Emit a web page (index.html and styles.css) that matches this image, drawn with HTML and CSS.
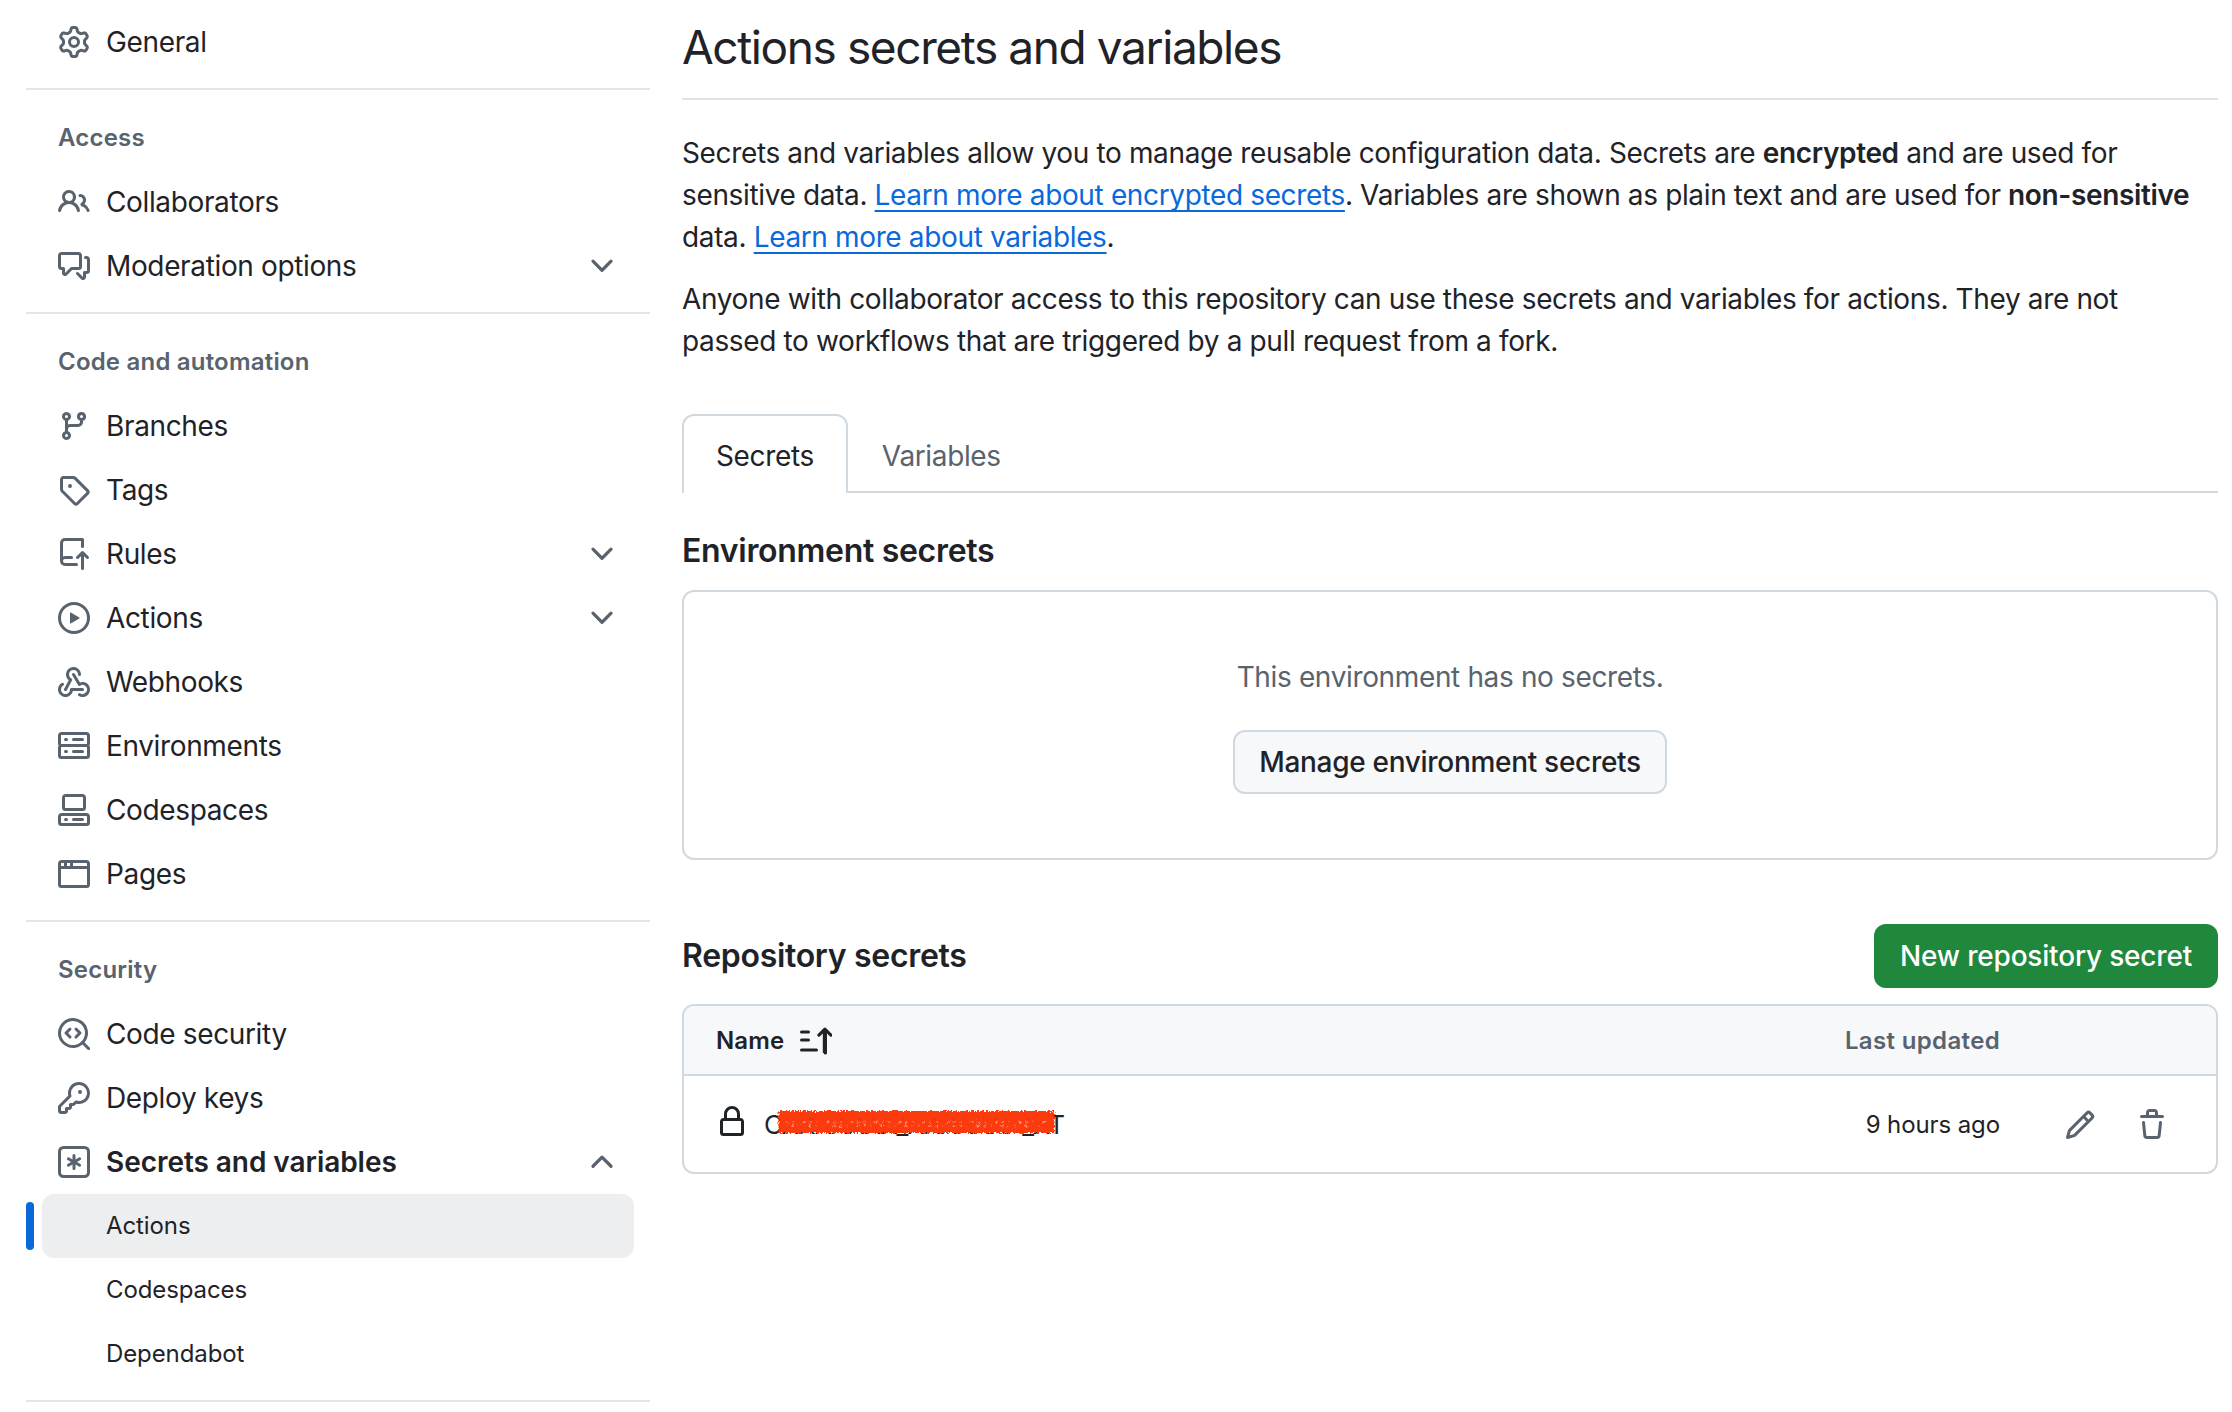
FILE: index.html
```html
<!DOCTYPE html>
<html lang="en">
<head>
<meta charset="utf-8">
<title>Actions secrets and variables</title>
<link rel="stylesheet" href="styles.css">
</head>
<body>
<svg class="defs" width="0" height="0" aria-hidden="true">
<filter id="rough" x="-5%" y="-30%" width="110%" height="160%"><feTurbulence type="fractalNoise" baseFrequency="0.55" numOctaves="2" seed="7"/><feDisplacementMap in="SourceGraphic" scale="5" xChannelSelector="R" yChannelSelector="G"/></filter>
<symbol id="gear" viewBox="0 0 16 16"><path d="M8 0a8.2 8.2 0 0 1 .701.031C9.444.095 9.99.645 10.16 1.29l.288 1.107c.018.066.079.158.212.224.231.114.454.243.668.386.123.082.233.09.299.071l1.103-.303c.644-.176 1.392.021 1.82.63.27.385.506.792.704 1.218.315.675.111 1.422-.364 1.891l-.814.806c-.049.048-.098.147-.088.294.016.257.016.515 0 .772-.01.147.038.246.088.294l.814.806c.475.469.679 1.216.364 1.891a7.977 7.977 0 0 1-.704 1.217c-.428.61-1.176.807-1.82.63l-1.102-.302c-.067-.019-.177-.011-.3.071a5.909 5.909 0 0 1-.668.386c-.133.066-.194.158-.211.224l-.29 1.106c-.168.646-.715 1.196-1.458 1.26a8.006 8.006 0 0 1-1.402 0c-.743-.064-1.289-.614-1.458-1.26l-.289-1.106c-.018-.066-.079-.158-.212-.224a5.738 5.738 0 0 1-.668-.386c-.123-.082-.233-.09-.299-.071l-1.103.303c-.644.176-1.392-.021-1.82-.63a8.12 8.12 0 0 1-.704-1.218c-.315-.675-.111-1.422.363-1.891l.815-.806c.05-.048.098-.147.088-.294a6.214 6.214 0 0 1 0-.772c.01-.147-.038-.246-.088-.294l-.815-.806C.635 6.045.431 5.298.746 4.623a7.92 7.92 0 0 1 .704-1.217c.428-.61 1.176-.807 1.82-.63l1.102.302c.067.019.177.011.3-.071.214-.143.437-.272.668-.386.133-.066.194-.158.211-.224l.29-1.106C6.009.645 6.556.095 7.299.03 7.53.01 7.764 0 8 0Zm-.571 1.525c-.036.003-.108.036-.137.146l-.289 1.105c-.147.561-.549.967-.998 1.189-.173.086-.34.183-.5.29-.417.278-.97.423-1.529.27l-1.103-.303c-.109-.03-.175.016-.195.045-.22.312-.412.644-.573.99-.014.031-.021.11.059.19l.815.806c.411.406.562.957.53 1.456a4.709 4.709 0 0 0 0 .582c.032.499-.119 1.05-.53 1.456l-.815.806c-.081.08-.073.159-.059.19.162.346.353.677.573.989.02.03.085.076.195.046l1.102-.303c.56-.153 1.113-.008 1.53.27.161.107.328.204.501.29.447.222.85.629.997 1.189l.289 1.105c.029.109.101.143.137.146a6.6 6.6 0 0 0 1.142 0c.036-.3.108-.036.137-.146l.289-1.105c.147-.561.549-.967.998-1.189.173-.086.34-.183.5-.29.417-.278.97-.423 1.529-.27l1.103.303c.109.029.175-.016.195-.045.22-.313.411-.644.573-.99.014-.031.021-.11-.059-.19l-.815-.806c-.411-.406-.562-.957-.53-1.456a4.709 4.709 0 0 0 0-.582c-.032-.499.119-1.05.53-1.456l.815-.806c.081-.08.073-.159.059-.19a6.464 6.464 0 0 0-.573-.989c-.02-.03-.085-.076-.195-.046l-1.102.303c-.56.153-1.113.008-1.53-.27a4.44 4.44 0 0 0-.501-.29c-.447-.222-.85-.629-.997-1.189l-.289-1.105c-.029-.11-.101-.143-.137-.146a6.6 6.6 0 0 0-1.142 0ZM11 8a3 3 0 1 1-6 0 3 3 0 0 1 6 0ZM9.5 8a1.5 1.5 0 1 0-3.001.001A1.5 1.5 0 0 0 9.5 8Z"/></symbol>
<symbol id="people" viewBox="0 0 16 16"><path d="M2 5.5a3.5 3.5 0 1 1 5.898 2.549 5.508 5.508 0 0 1 3.034 4.084.75.75 0 1 1-1.482.235 4 4 0 0 0-7.9 0 .75.75 0 0 1-1.482-.236A5.507 5.507 0 0 1 3.102 8.05 3.493 3.493 0 0 1 2 5.5ZM11 4a3.001 3.001 0 0 1 2.22 5.018 5.01 5.01 0 0 1 2.56 3.012.749.749 0 0 1-.885.954.752.752 0 0 1-.549-.514 3.507 3.507 0 0 0-2.522-2.372.75.75 0 0 1-.574-.73v-.352a.75.75 0 0 1 .416-.672A1.5 1.5 0 0 0 11 5.5.75.75 0 0 1 11 4Zm-5.5-.5a2 2 0 1 0-.001 3.999A2 2 0 0 0 5.5 3.5Z"/></symbol>
<symbol id="discussion" viewBox="0 0 16 16"><path d="M1.75 1h8.5c.966 0 1.75.784 1.75 1.75v5.5A1.75 1.75 0 0 1 10.25 10H7.061l-2.574 2.573A1.458 1.458 0 0 1 2 11.543V10h-.25A1.75 1.75 0 0 1 0 8.25v-5.5C0 1.784.784 1 1.75 1ZM1.5 2.75v5.5c0 .138.112.25.25.25h1a.75.75 0 0 1 .75.75v2.19l2.72-2.72a.749.749 0 0 1 .53-.22h3.5a.25.25 0 0 0 .25-.25v-5.5a.25.25 0 0 0-.25-.25h-8.5a.25.25 0 0 0-.25.25Zm13 2a.25.25 0 0 0-.25-.25h-.5a.75.75 0 0 1 0-1.5h.5c.966 0 1.75.784 1.75 1.75v5.5A1.75 1.75 0 0 1 14.25 12H14v1.543a1.458 1.458 0 0 1-2.487 1.03L9.22 12.28a.749.749 0 0 1 .326-1.275.749.749 0 0 1 .734.215l2.22 2.22v-2.19a.75.75 0 0 1 .75-.75h1a.25.25 0 0 0 .25-.25Z"/></symbol>
<symbol id="branch" viewBox="0 0 16 16"><path d="M9.5 3.25a2.25 2.25 0 1 1 3 2.122V6A2.5 2.5 0 0 1 10 8.5H6a1 1 0 0 0-1 1v1.128a2.251 2.251 0 1 1-1.5 0V5.372a2.25 2.25 0 1 1 1.5 0v1.836A2.493 2.493 0 0 1 6 7h4a1 1 0 0 0 1-1v-.628A2.25 2.25 0 0 1 9.5 3.25Zm-6 0a.75.75 0 1 0 1.5 0 .75.75 0 0 0-1.5 0Zm8.25-.75a.75.75 0 1 0 0 1.5.75.75 0 0 0 0-1.5ZM4.25 12a.75.75 0 1 0 0 1.5.75.75 0 0 0 0-1.5Z"/></symbol>
<symbol id="tag" viewBox="0 0 16 16"><path d="M1 7.775V2.75C1 1.784 1.784 1 2.75 1h5.025c.464 0 .91.184 1.238.513l6.25 6.25a1.75 1.75 0 0 1 0 2.474l-5.026 5.026a1.75 1.75 0 0 1-2.474 0l-6.25-6.25A1.752 1.752 0 0 1 1 7.775Zm1.5 0c0 .066.026.13.073.177l6.25 6.25a.25.25 0 0 0 .354 0l5.025-5.025a.25.25 0 0 0 0-.354l-6.25-6.25a.25.25 0 0 0-.177-.073H2.75a.25.25 0 0 0-.25.25ZM6 5a1 1 0 1 1 0 2 1 1 0 0 1 0-2Z"/></symbol>
<symbol id="push" viewBox="0 0 16 16"><path d="M1 2.5A2.5 2.5 0 0 1 3.5 0h8.75a.75.75 0 0 1 .75.75v3.5a.75.75 0 0 1-1.5 0V1.5h-8a1 1 0 0 0-1 1v6.708A2.493 2.493 0 0 1 3.5 9h3.25a.75.75 0 0 1 0 1.5H3.5a1 1 0 0 0 0 2h5.75a.75.75 0 0 1 0 1.5H3.5A2.5 2.5 0 0 1 1 11.5Zm13.23 7.79h-.001l-1.224-1.224v6.184a.75.75 0 0 1-1.5 0V9.066L10.28 10.29a.75.75 0 0 1-1.06-1.061l2.505-2.504a.75.75 0 0 1 1.06 0L15.29 9.23a.751.751 0 0 1-.018 1.042.751.751 0 0 1-1.042.018Z"/></symbol>
<symbol id="play" viewBox="0 0 16 16"><path d="M8 0a8 8 0 1 1 0 16A8 8 0 0 1 8 0ZM1.5 8a6.5 6.5 0 1 0 13 0 6.5 6.5 0 0 0-13 0Zm4.879-2.773 4.264 2.559a.25.25 0 0 1 0 .428l-4.264 2.559A.25.25 0 0 1 6 10.559V5.442a.25.25 0 0 1 .379-.215Z"/></symbol>
<symbol id="webhook" viewBox="0 0 16 16"><path d="M5.5 4.25a2.25 2.25 0 0 1 4.5 0 .75.75 0 0 0 1.5 0 3.75 3.75 0 1 0-6.14 2.889l-2.272 4.258a.75.75 0 0 0 1.324.706L7 7.25a.75.75 0 0 0-.309-1.015A2.25 2.25 0 0 1 5.5 4.25Z"/><path d="M7.364 3.607a.75.75 0 0 1 1.03.257l2.608 4.349a3.75 3.75 0 1 1-.628 6.785.75.75 0 0 1 .752-1.299 2.25 2.25 0 1 0-.033-3.88.75.75 0 0 1-1.03-.256L7.107 4.636a.75.75 0 0 1 .257-1.03Z"/><path d="M2.9 8.776A.75.75 0 0 1 2.625 9.8 2.25 2.25 0 1 0 6 11.75a.75.75 0 0 1 .75-.751h5.5a.75.75 0 0 1 0 1.5H7.425a3.751 3.751 0 1 1-5.55-3.998.75.75 0 0 1 1.024.274Z"/></symbol>
<symbol id="server" viewBox="0 0 16 16"><path d="M1.75 1h12.5c.966 0 1.75.784 1.75 1.75v4c0 .372-.116.717-.314 1 .198.283.314.628.314 1v4a1.75 1.75 0 0 1-1.75 1.75H1.75A1.75 1.75 0 0 1 0 12.75v-4c0-.372.116-.717.314-1a1.739 1.739 0 0 1-.314-1v-4C0 1.784.784 1 1.75 1ZM1.5 2.75v4c0 .138.112.25.25.25h12.5a.25.25 0 0 0 .25-.25v-4a.25.25 0 0 0-.25-.25H1.75a.25.25 0 0 0-.25.25Zm.25 5.75a.25.25 0 0 0-.25.25v4c0 .138.112.25.25.25h12.5a.25.25 0 0 0 .25-.25v-4a.25.25 0 0 0-.25-.25ZM7 4.75A.75.75 0 0 1 7.75 4h4.5a.75.75 0 0 1 0 1.5h-4.5A.75.75 0 0 1 7 4.75ZM7.75 10h4.5a.75.75 0 0 1 0 1.5h-4.5a.75.75 0 0 1 0-1.5ZM3 4.75A.75.75 0 0 1 3.75 4h.5a.75.75 0 0 1 0 1.5h-.5A.75.75 0 0 1 3 4.75ZM3.75 10h.5a.75.75 0 0 1 0 1.5h-.5a.75.75 0 0 1 0-1.5Z"/></symbol>
<symbol id="codespaces" viewBox="0 0 16 16"><path d="M0 11.25c0-.966.784-1.75 1.75-1.75h12.5c.966 0 1.75.784 1.75 1.75v3A1.75 1.75 0 0 1 14.25 16H1.75A1.75 1.75 0 0 1 0 14.25Zm2-9.5C2 .784 2.784 0 3.75 0h8.5C13.216 0 14 .784 14 1.75v5a1.75 1.75 0 0 1-1.75 1.75h-8.5A1.75 1.75 0 0 1 2 6.75Zm1.75-.25a.25.25 0 0 0-.25.25v5c0 .138.112.25.25.25h8.5a.25.25 0 0 0 .25-.25v-5a.25.25 0 0 0-.25-.25Zm-2 9.5a.25.25 0 0 0-.25.25v3c0 .138.112.25.25.25h12.5a.25.25 0 0 0 .25-.25v-3a.25.25 0 0 0-.25-.25Z"/><path d="M7 12.75a.75.75 0 0 1 .75-.75h4.5a.75.75 0 0 1 0 1.5h-4.5a.75.75 0 0 1-.75-.75Zm-4 0a.75.75 0 0 1 .75-.75h.5a.75.75 0 0 1 0 1.5h-.5a.75.75 0 0 1-.75-.75Z"/></symbol>
<symbol id="browser" viewBox="0 0 16 16"><path d="M0 2.75C0 1.784.784 1 1.75 1h12.5c.966 0 1.75.784 1.75 1.75v10.5A1.75 1.75 0 0 1 14.25 15H1.75A1.75 1.75 0 0 1 0 13.25ZM14.5 5.5h-13v7.75c0 .138.112.25.25.25h12.5a.25.25 0 0 0 .25-.25ZM1.5 4H3V2.5H1.75a.25.25 0 0 0-.25.25Zm3 0H6V2.5H4.5Zm3 0h7V2.75a.25.25 0 0 0-.25-.25H7.5Z"/></symbol>
<symbol id="codescan" viewBox="0 0 16 16"><path d="M8.47 4.97a.75.75 0 0 0 0 1.06L9.94 7.5 8.47 8.97a.75.75 0 1 0 1.06 1.06l2-2a.75.75 0 0 0 0-1.06l-2-2a.75.75 0 0 0-1.06 0ZM6.53 6.03a.75.75 0 0 0-1.06-1.06l-2 2a.75.75 0 0 0 0 1.06l2 2a.75.75 0 1 0 1.06-1.06L5.06 7.5l1.47-1.47Z"/><path d="M12.246 13.307a7.501 7.501 0 1 1 1.06-1.06l2.474 2.473a.749.749 0 0 1-.326 1.275.749.749 0 0 1-.734-.215ZM1.5 7.5a6.014 6.014 0 0 0 1.705 4.197c.02.018.04.036.058.057A6 6 0 1 0 1.5 7.5Z"/></symbol>
<symbol id="key" viewBox="0 0 16 16"><path d="M10.5 0a5.499 5.499 0 1 1-1.288 10.848l-.932.932a.749.749 0 0 1-.53.22H7v.75a.749.749 0 0 1-.22.53l-.5.5a.749.749 0 0 1-.53.22H5v.75a.749.749 0 0 1-.22.53l-.5.5a.749.749 0 0 1-.53.22h-2A1.75 1.75 0 0 1 0 14.25v-2c0-.199.079-.389.22-.53l4.932-4.932A5.5 5.5 0 0 1 10.5 0Zm-4 5.5c-.001.431.069.86.205 1.269a.75.75 0 0 1-.181.768L1.5 12.56v1.69c0 .138.112.25.25.25h1.69l.06-.06v-1.19a.75.75 0 0 1 .75-.75h1.19l.06-.06v-1.19a.75.75 0 0 1 .75-.75h1.19l1.023-1.025a.75.75 0 0 1 .768-.18A4 4 0 1 0 6.5 5.5ZM11 6a1 1 0 1 1 0-2 1 1 0 0 1 0 2Z"/></symbol>
<symbol id="asterisk" viewBox="0 0 16 16"><path d="M0 2.75A2.75 2.75 0 0 1 2.75 0h10.5A2.75 2.75 0 0 1 16 2.75v10.5A2.75 2.75 0 0 1 13.25 16H2.75A2.75 2.75 0 0 1 0 13.25ZM2.75 1.5c-.69 0-1.25.56-1.25 1.25v10.5c0 .69.56 1.25 1.25 1.25h10.5c.69 0 1.25-.56 1.25-1.25V2.75c0-.69-.56-1.25-1.25-1.25Z"/><path d="M8 4a.75.75 0 0 1 .75.75V6.7l1.69-.975a.75.75 0 0 1 .75 1.3L9.5 8l1.69.976a.75.75 0 0 1-.75 1.298L8.75 9.3v1.951a.75.75 0 0 1-1.5 0V9.299l-1.69.976a.75.75 0 0 1-.75-1.3L6.5 8l-1.69-.975a.75.75 0 0 1 .75-1.3l1.69.976V4.75A.75.75 0 0 1 8 4Z"/></symbol>
<symbol id="down" viewBox="0 0 16 16"><path d="M12.78 5.22a.749.749 0 0 1 0 1.06l-4.25 4.25a.749.749 0 0 1-1.06 0L3.22 6.28a.749.749 0 1 1 1.06-1.06L8 8.939l3.72-3.719a.749.749 0 0 1 1.06 0Z"/></symbol>
<symbol id="up" viewBox="0 0 16 16"><path d="M3.22 10.53a.749.749 0 0 1 0-1.06l4.25-4.25a.749.749 0 0 1 1.06 0l4.25 4.25a.749.749 0 1 1-1.06 1.06L8 6.811 4.28 10.53a.749.749 0 0 1-1.06 0Z"/></symbol>
<symbol id="lock" viewBox="0 0 16 16"><path d="M4 4a4 4 0 0 1 8 0v2h.25c.966 0 1.75.784 1.75 1.75v5.5A1.75 1.75 0 0 1 12.25 15h-8.5A1.75 1.75 0 0 1 2 13.25v-5.5C2 6.784 2.784 6 3.75 6H4Zm8.25 3.5h-8.5a.25.25 0 0 0-.25.25v5.5c0 .138.112.25.25.25h8.5a.25.25 0 0 0 .25-.25v-5.5a.25.25 0 0 0-.25-.25ZM10.5 6V4a2.5 2.5 0 1 0-5 0v2Z"/></symbol>
<symbol id="pencil" viewBox="0 0 16 16"><path d="M11.013 1.427a1.75 1.75 0 0 1 2.474 0l1.086 1.086a1.75 1.75 0 0 1 0 2.474l-8.61 8.61c-.21.21-.47.364-.756.445l-3.251.93a.75.75 0 0 1-.927-.928l.929-3.25c.081-.286.235-.547.445-.758l8.61-8.61Zm.176 4.823L9.75 4.81l-6.286 6.287a.253.253 0 0 0-.064.108l-.558 1.953 1.953-.558a.253.253 0 0 0 .108-.064Zm1.238-3.763a.25.25 0 0 0-.354 0L10.811 3.75l1.439 1.44 1.263-1.263a.25.25 0 0 0 0-.354Z"/></symbol>
<symbol id="trash" viewBox="0 0 16 16"><path d="M11 1.75V3h2.25a.75.75 0 0 1 0 1.5H2.75a.75.75 0 0 1 0-1.5H5V1.75C5 .784 5.784 0 6.75 0h2.5C10.216 0 11 .784 11 1.75ZM4.496 6.675l.66 6.6a.25.25 0 0 0 .249.225h5.19a.25.25 0 0 0 .249-.225l.66-6.6a.75.75 0 0 1 1.492.149l-.66 6.6A1.748 1.748 0 0 1 10.595 15h-5.19a1.75 1.75 0 0 1-1.741-1.575l-.66-6.6a.75.75 0 1 1 1.492-.15ZM6.5 1.75V3h3V1.75a.25.25 0 0 0-.25-.25h-2.5a.25.25 0 0 0-.25.25Z"/></symbol>
<symbol id="sort" viewBox="0 0 16 16"><path d="M.75 2.75h3.5a.75.75 0 0 1 0 1.5H.75a.75.75 0 0 1 0-1.5Zm0 4h3.5a.75.75 0 0 1 0 1.5H.75a.75.75 0 0 1 0-1.5Zm0 5h7.5a.75.75 0 0 1 0 1.5H.75a.75.75 0 0 1 0-1.5Z"/><path d="M11.4 14V4.2L10 5.6a.75.75 0 0 1-1.1-1.1l3-3a.75.75 0 0 1 1.1 0l3 3a.75.75 0 0 1-1.1 1.1l-1.4-1.4V14a.8.8 0 0 1-1.6 0Z"/></symbol>
</svg>

<div class="page">
  <nav class="sidebar">
    <a class="item"><svg class="icon"><use href="#gear"/></svg><span class="label">General</span></a>
    <hr class="rule">
    <h2 class="group">Access</h2>
    <a class="item"><svg class="icon"><use href="#people"/></svg><span class="label">Collaborators</span></a>
    <a class="item"><svg class="icon"><use href="#discussion"/></svg><span class="label">Moderation options</span><svg class="chev"><use href="#down"/></svg></a>
    <hr class="rule">
    <h2 class="group">Code and automation</h2>
    <a class="item"><svg class="icon"><use href="#branch"/></svg><span class="label">Branches</span></a>
    <a class="item"><svg class="icon"><use href="#tag"/></svg><span class="label">Tags</span></a>
    <a class="item"><svg class="icon"><use href="#push"/></svg><span class="label">Rules</span><svg class="chev"><use href="#down"/></svg></a>
    <a class="item"><svg class="icon"><use href="#play"/></svg><span class="label">Actions</span><svg class="chev"><use href="#down"/></svg></a>
    <a class="item"><svg class="icon"><use href="#webhook"/></svg><span class="label">Webhooks</span></a>
    <a class="item"><svg class="icon"><use href="#server"/></svg><span class="label">Environments</span></a>
    <a class="item"><svg class="icon"><use href="#codespaces"/></svg><span class="label">Codespaces</span></a>
    <a class="item"><svg class="icon"><use href="#browser"/></svg><span class="label">Pages</span></a>
    <hr class="rule">
    <h2 class="group">Security</h2>
    <a class="item"><svg class="icon"><use href="#codescan"/></svg><span class="label">Code security</span></a>
    <a class="item"><svg class="icon"><use href="#key"/></svg><span class="label">Deploy keys</span></a>
    <a class="item item-open"><svg class="icon"><use href="#asterisk"/></svg><span class="label">Secrets and variables</span><svg class="chev"><use href="#up"/></svg></a>
    <a class="sub sub-active">Actions</a>
    <a class="sub">Codespaces</a>
    <a class="sub">Dependabot</a>
    <hr class="rule">
  </nav>

  <main class="content">
    <h1 class="title">Actions secrets and variables</h1>
    <p class="intro">Secrets and variables allow you to manage reusable configuration data. Secrets are <strong>encrypted</strong> and are used for sensitive data. <a class="link">Learn more about encrypted secrets</a>. Variables are shown as plain text and are used for <strong>non-sensitive</strong> data. <a class="link">Learn more about variables</a>.</p>
    <p class="intro intro-next">Anyone with collaborator access to this repository can use these secrets and variables for actions. They are not passed to workflows that are triggered by a pull request from a fork.</p>

    <div class="tabs">
      <a class="tab tab-active">Secrets</a>
      <a class="tab">Variables</a>
    </div>

    <h3 class="section">Environment secrets</h3>
    <div class="blank">
      <p class="blank-text">This environment has no secrets.</p>
      <a class="btn">Manage environment secrets</a>
    </div>

    <div class="repo-head">
      <h3 class="section section-flat">Repository secrets</h3>
      <a class="btn-primary">New repository secret</a>
    </div>
    <div class="table">
      <div class="thead">
        <div class="cell-name th-name">Name <svg class="sort"><use href="#sort"/></svg></div>
        <div class="th-date">Last updated</div>
        <div class="cell-actions"></div>
      </div>
      <div class="trow">
        <div class="cell-name">
          <svg class="lock"><use href="#lock"/></svg>
          <span class="secret">CXXXXXXX_XXXXXXX_XT
            <svg class="scribble" viewBox="0 0 278 24" aria-hidden="true"><g filter="url(#rough)"><rect class="scrib-fill" x="1" y="1" width="276" height="22"/><path class="scrib-fleck" d="M8 12H270M14 16H262"/><path class="scrib-fleck-b" d="M20 9H250"/></g></svg>
          </span>
        </div>
        <div class="td-date">9 hours ago</div>
        <div class="cell-actions"><svg class="act"><use href="#pencil"/></svg><svg class="act"><use href="#trash"/></svg></div>
      </div>
    </div>
  </main>
</div>
</body>
</html>
```

FILE: styles.css
```css
* { box-sizing: border-box; }
html, body { margin: 0; height: 1412px; overflow: hidden; background: #fff; }
body { font-family: Inter, "Liberation Sans", sans-serif; color: #1f2328; font-size: 28px; line-height: 42px; letter-spacing: -0.36px; }
.defs { position: absolute; }
.page { display: flex; align-items: flex-start; padding-left: 26px; }

.sidebar { width: 624px; flex: none; padding-top: 10px; }
.rule { height: 2px; border: 0; margin: 14px 0; background: #e3e6e9; }
.rule + .group { margin-top: -14px; }
.group { margin: 0; padding: 32px 0 16px 32px; font-size: 24px; line-height: 32px; font-weight: 600; color: #59636e; letter-spacing: 0.2px; }
.item { display: flex; align-items: center; height: 64px; padding: 0 31px 0 32px; color: #1f2328; font-size: 28px; }
.icon { width: 32px; height: 32px; flex: none; margin-right: 16px; fill: #59636e; }
.label { flex: 1; }
.chev { width: 34px; height: 34px; flex: none; fill: #59636e; }
.item-open .label { font-weight: 600; letter-spacing: -0.05px; }
.sub { position: relative; display: flex; align-items: center; height: 64px; margin: 0 16px; padding-left: 64px; border-radius: 12px; font-size: 24px; letter-spacing: -0.1px; color: #1f2328; }
.sub-active { background: #eceef0; }
.sub-active::before { content: ""; position: absolute; left: -16px; top: 8px; width: 8px; height: 48px; border-radius: 8px; background: #0969da; }

.content { width: 1536px; margin-left: 32px; padding-top: 11px; flex: none; }
.title { margin: 0; padding-bottom: 15px; border-bottom: 2px solid #dfe3e7; font-size: 46px; line-height: 72px; font-weight: 400; letter-spacing: -1.4px; }
.intro { margin: 32px 0 0; }
.intro-next { margin-top: 20px; }
.intro strong { font-weight: 600; }
.link { color: #0969da; text-decoration: underline; text-decoration-thickness: 2px; text-decoration-skip-ink: none; text-underline-offset: 5px; }

.tabs { display: flex; height: 79px; margin-top: 52px; border-bottom: 2px solid #d1d9e0; }
.tab { display: flex; align-items: center; height: 79px; padding: 2px 32px 0; color: #59636e; border: 2px solid transparent; border-bottom: 0; }
.tab-active { color: #1f2328; background: #fff; border-color: #d1d9e0; border-radius: 12px 12px 0 0; }

.section { margin: 34px 0 15px; font-size: 32px; line-height: 48px; font-weight: 600; letter-spacing: -0.3px; }
.section-flat { margin: 0; }

.blank { display: flex; flex-direction: column; align-items: center; height: 270px; padding-top: 64px; border: 2px solid #d1d9e0; border-radius: 12px; }
.blank-text { margin: 0 0 32px; color: #59636e; }
.btn { display: flex; align-items: center; justify-content: center; height: 64px; padding: 0 24px; border: 2px solid #d1d9e0; border-radius: 12px; background: #f6f8fa; font-weight: 500; letter-spacing: -0.3px; }

.repo-head { display: flex; align-items: center; justify-content: space-between; margin: 64px 0 16px; }
.btn-primary { display: flex; align-items: center; height: 64px; padding: 0 26px; border-radius: 12px; background: #1f883d; color: #fff; font-weight: 500; letter-spacing: -0.19px; }

.table { border: 2px solid #d1d9e0; border-radius: 12px; overflow: hidden; }
.thead { display: flex; align-items: center; height: 70px; padding-top: 2px; background: #f6f8fa; border-bottom: 2px solid #d1d9e0; font-size: 24px; font-weight: 600; letter-spacing: 0.1px; }
.trow { display: flex; align-items: center; height: 96px; padding-top: 2px; font-size: 24px; letter-spacing: 0; }
.cell-name { flex: 1; display: flex; align-items: center; padding-left: 32px; }
.th-name { gap: 16px; }
.sort { width: 32px; height: 32px; fill: #1f2328; }
.th-date { color: #59636e; letter-spacing: 0.35px; }
.td-date { color: #1f2328; letter-spacing: -0.1px; }
.cell-actions { display: flex; gap: 40px; width: 216px; padding: 0 48px 0 64px; }
.act { width: 32px; height: 32px; fill: #59636e; }
.lock { width: 32px; height: 32px; margin: 0 16px 7px 0; fill: #1f2328; }
.secret { position: relative; font-size: 26px; letter-spacing: -1.3px; color: #1f2328; white-space: nowrap; }
.scribble { position: absolute; left: 13px; top: 6px; width: 279px; height: 24px; overflow: visible; }
.scrib-fill { fill: #fb3a0c; }
.scrib-fleck { fill: none; stroke: #ff9a84; stroke-width: 1.5; stroke-dasharray: 2 5 1 9 3 4; }
.scrib-fleck-b { fill: none; stroke: #a83a20; stroke-width: 1; stroke-dasharray: 1 11 2 17; }
```
